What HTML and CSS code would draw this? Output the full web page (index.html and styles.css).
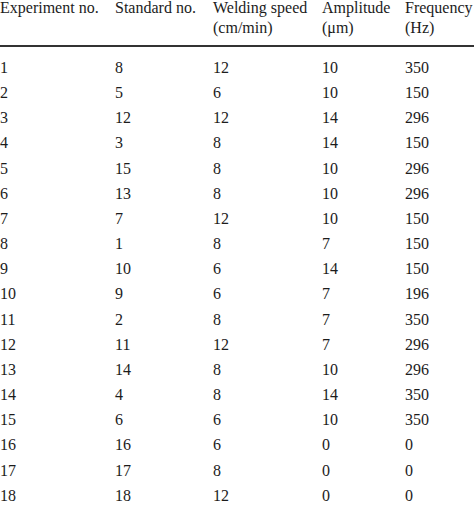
FILE: index.html
```html
<!DOCTYPE html>
<html>
<head>
<meta charset="utf-8">
<link rel="stylesheet" href="styles.css">
</head>
<body>
<table class="data">
  <colgroup>
    <col class="c1"><col class="c2"><col class="c3"><col class="c4"><col class="c5">
  </colgroup>
  <thead>
    <tr>
      <th><div class="l1">Experiment no.</div></th>
      <th><div class="l1">Standard no.</div></th>
      <th><div class="l1">Welding speed</div><div class="l2">(cm/min)</div></th>
      <th><div class="l1">Amplitude</div><div class="l2">(μm)</div></th>
      <th><div class="l1">Frequency</div><div class="l2">(Hz)</div></th>
    </tr>
  </thead>
  <tbody>
    <tr><td>1</td><td>8</td><td>12</td><td>10</td><td>350</td></tr>
    <tr><td>2</td><td>5</td><td>6</td><td>10</td><td>150</td></tr>
    <tr><td>3</td><td>12</td><td>12</td><td>14</td><td>296</td></tr>
    <tr><td>4</td><td>3</td><td>8</td><td>14</td><td>150</td></tr>
    <tr><td>5</td><td>15</td><td>8</td><td>10</td><td>296</td></tr>
    <tr><td>6</td><td>13</td><td>8</td><td>10</td><td>296</td></tr>
    <tr><td>7</td><td>7</td><td>12</td><td>10</td><td>150</td></tr>
    <tr><td>8</td><td>1</td><td>8</td><td>7</td><td>150</td></tr>
    <tr><td>9</td><td>10</td><td>6</td><td>14</td><td>150</td></tr>
    <tr><td>10</td><td>9</td><td>6</td><td>7</td><td>196</td></tr>
    <tr><td>11</td><td>2</td><td>8</td><td>7</td><td>350</td></tr>
    <tr><td>12</td><td>11</td><td>12</td><td>7</td><td>296</td></tr>
    <tr><td>13</td><td>14</td><td>8</td><td>10</td><td>296</td></tr>
    <tr><td>14</td><td>4</td><td>8</td><td>14</td><td>350</td></tr>
    <tr><td>15</td><td>6</td><td>6</td><td>10</td><td>350</td></tr>
    <tr><td>16</td><td>16</td><td>6</td><td>0</td><td>0</td></tr>
    <tr><td>17</td><td>17</td><td>8</td><td>0</td><td>0</td></tr>
    <tr><td>18</td><td>18</td><td>12</td><td>0</td><td>0</td></tr>
  </tbody>
</table>
</body>
</html>
```
FILE: styles.css
```css
html, body {
  margin: 0;
  padding: 0;
  background: #ffffff;
}

body {
  font-family: "Liberation Serif", "Times New Roman", serif;
  font-size: 16px;
  color: #1c1c1c;
  overflow: hidden;
}

.data {
  width: 474px;
  table-layout: fixed;
  border-collapse: collapse;
}

.c1 { width: 115px; }
.c2 { width: 98px; }
.c3 { width: 109px; }
.c4 { width: 83px; }
.c5 { width: 69px; }

.data th {
  font-weight: normal;
  text-align: left;
  vertical-align: top;
  padding: 0 0 5px 0;
  white-space: nowrap;
  border-bottom: 2px solid #333333;
}

.data th .l1 {
  line-height: 15px;
}

.data th .l2 {
  line-height: 25px;
}

.data td {
  text-align: left;
  padding: 0;
  line-height: 25.15px;
  white-space: nowrap;
}

.data tbody tr:first-child td {
  padding-top: 8px;
}
```
